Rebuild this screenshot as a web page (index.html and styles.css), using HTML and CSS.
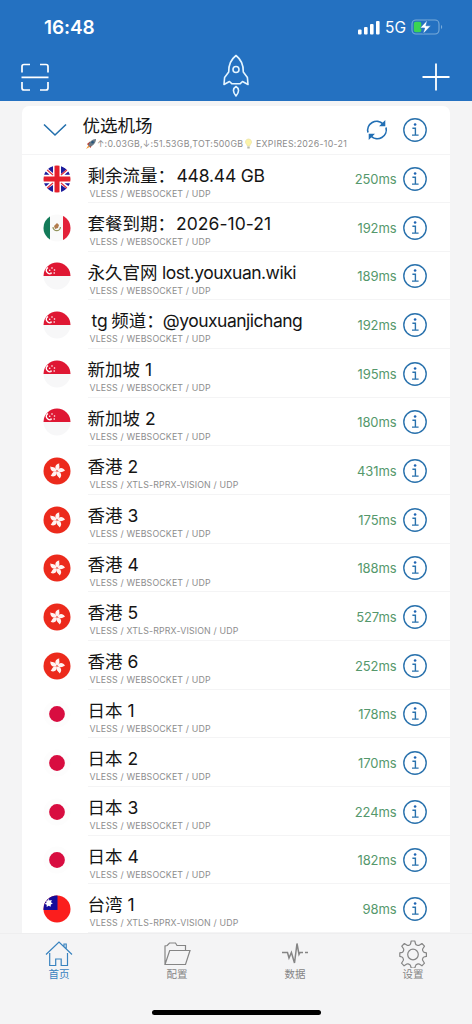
FILE: index.html
```html
<!DOCTYPE html>
<html lang="zh-CN">
<head>
<meta charset="utf-8">
<title>优选机场</title>
<link rel="stylesheet" href="styles.css">
</head>
<body>
<svg class="defs" width="0" height="0">
  <defs>
    <clipPath id="round"><circle cx="14" cy="14" r="13.5"/></clipPath>
    <symbol id="info" viewBox="0 0 26 26">
      <g fill="none" stroke="#2a72ad" stroke-width="1.4"><circle cx="13" cy="13" r="11.2"/><path d="M10.4 11.2H13.4V17.8M10 18.1H16.6"/></g>
      <circle cx="13.1" cy="7.5" r="1.3" fill="#1f64b4"/>
    </symbol>
    <symbol id="gb" viewBox="0 0 28 28"><g clip-path="url(#round)">
      <path fill="#fff" d="M0 0h28v28H0z"/>
      <path fill="#1c1c9c" d="M4 3 10 1v7zM1 9v-4L6.500 9.800H1zM18 1l6 3-6 5zM21.500 9.800 27 5v4.800zM1 18.200h5.500L1 23zM10 20v8l-6-4zM18 20l6 4-6 4zM21.500 18.200H28V23z"/>
      <path stroke="#e53342" stroke-width="1.300" d="M3 4l7 6M25 4l-7 6M3 24l7-6M25 24l-7-6"/>
      <path stroke="#e5202d" stroke-width="5" d="M14 0v28M0 14h28"/>
    </g></symbol>
    <symbol id="mx" viewBox="0 0 28 28"><g clip-path="url(#round)">
      <path fill="#fafafa" d="M0 0h28v28H0z"/><path fill="#137b59" d="M0 0h7v28H0z"/><path fill="#e32139" d="M20 0h8v28h-8z"/>
      <path fill="none" stroke="#91935b" stroke-width="1.200" d="M10 13a3.700 3.700 0 0 0 7.400 0"/><path fill="#b17b4c" d="M11 12l3-3 2 2-1 3-3 1z"/>
    </g></symbol>
    <symbol id="sg" viewBox="0 0 28 28"><g clip-path="url(#round)">
      <path fill="#f7f7f8" d="M0 0h28v28H0z"/><path fill="#df1733" d="M0 0h28v14H0z"/>
      <path fill="none" stroke="#fff" stroke-width="1.300" d="M5 5.500c-4 3 0 7.500 3.500 6"/>
      <g fill="#fff"><circle cx="9" cy="6" r=".8"/><circle cx="6.700" cy="8.200" r=".8"/><circle cx="11.500" cy="8" r=".8"/><circle cx="8" cy="11" r=".8"/><circle cx="11.200" cy="11" r=".8"/></g>
    </g></symbol>
    <symbol id="hk" viewBox="0 0 28 28">
      <circle cx="14" cy="14" r="13.500" fill="#ec2a1c"/>
      <g fill="#fff4f2" transform="rotate(12 14 14)">
        <path id="petal" d="M14 13.500c-3.400-1.200-3.400-6.200.8-7.400-.7 2.100 2.700 3.400-.8 7.400z"/>
        <use href="#petal" transform="rotate(72 14 14)"/><use href="#petal" transform="rotate(144 14 14)"/><use href="#petal" transform="rotate(216 14 14)"/><use href="#petal" transform="rotate(288 14 14)"/>
      </g>
    </symbol>
    <symbol id="jp" viewBox="0 0 28 28"><circle cx="14" cy="14" r="13.500" fill="#fdfdfd"/><circle cx="14" cy="14" r="7.900" fill="#d80d40"/></symbol>
    <symbol id="tw" viewBox="0 0 28 28"><g clip-path="url(#round)">
      <path fill="#fb1e1d" d="M0 0h28v28H0z"/><path fill="#150c9b" d="M0 0h14.500v15H0z"/>
      <path fill="#fff" d="M5.500 3.500l1 2 2.300-.4-.8 2.200 1.800 1.200-2 1-.1 2.300-2-1-2 1.300v-2.300l-2-1 1.900-1.300L3 5.200l2.100.3z"/>
    </g></symbol>
  </defs>
</svg>

<header class="top">
  <div class="status">
    <span class="clock">16:48</span>
    <div class="signals">
      <svg width="22" height="15" viewBox="0 0 22 15" fill="#fff"><rect x="0" y="9.500" width="3.600" height="5" rx="1"/><rect x="6" y="7" width="3.600" height="7.500" rx="1"/><rect x="12" y="4" width="3.600" height="10.500" rx="1"/><rect x="18" y="1" width="3.600" height="13.500" rx="1"/></svg>
      <span class="net">5G</span>
      <svg width="32" height="18" viewBox="0 0 32 18"><rect x="1" y="2" width="27" height="14" rx="4" fill="none" stroke="#79abd9" stroke-width="1.100"/><path d="M30 7v4c1.600-.5 1.600-3.500 0-4z" fill="#79abd9"/><rect x="2.800" y="3.700" width="7.500" height="10.600" rx="2" fill="#3ad453"/><path d="M16.500 2 9 10h4.700L12 16l7.800-8.200h-4.900z" fill="#fff" stroke="#2471c0" stroke-width=".6"/></svg>
    </div>
  </div>
  <nav class="toolbar">
    <svg width="28" height="28" viewBox="0 0 28 28" fill="none" stroke="#fff" stroke-width="1.700"><path d="M1 9.500V3.500Q1 1.500 3 1.500H9M19 1.500h6q2 0 2 2v6M1 19v6q0 2 2 2H9M19 27h6q2 0 2-2v-6M0.500 14.300h27"/></svg>
    <svg width="28" height="46" viewBox="0 0 28 46" fill="none" stroke="#e5f5ff" stroke-width="1.600" stroke-linejoin="round"><path d="M14 1.500C9.500 5 6.500 10 6.700 18L2.600 23.500 2 30.500l5.500-3 2.500 2.300h8l2.500-2.300 5.500 3-.6-7-4.100-5.500C21.500 10 18.500 5 14 1.500z"/><circle cx="14" cy="15.500" r="3"/><path d="M14 32.500c-3.400 2-3.400 5.500 0 9.500 3.400-4 3.400-7.500 0-9.500z"/></svg>
    <svg width="28" height="28" viewBox="0 0 28 28" stroke="#fff" stroke-width="1.800"><path d="M14 .5v27M.5 14h27"/></svg>
  </nav>
</header>

<main class="card">
  <section class="group">
    <svg class="chevron" width="24" height="14" viewBox="0 0 24 14" fill="none" stroke="#2470ad" stroke-width="1.600"><path d="M1 1.500 12 12 23 1.500"/></svg>
    <div class="group-text">
      <div class="title">优选机场</div>
      <div class="quota">
        <svg width="12" height="12" viewBox="0 0 12 12"><path d="M2 6 5 3.500 6.500 8 5.500 10z" fill="#c33b2f"/><path d="M11 1C7 1 4 4.500 3.300 7.200l1.500 1.500C8 8 11 5 11 1z" fill="#697986"/><circle cx="7.600" cy="4.200" r="1.200" fill="#27577f"/><path d="M3.300 7.500 1 11l3.500-2z" fill="#f29a2e"/></svg>
        <span class="usage">↑:0.03GB,↓:51.53GB,TOT:500GB</span>
        <svg width="9" height="12" viewBox="0 0 9 12"><path d="M4.500 1a3 3 0 0 0-2 5.300L3.300 8h2.400l.8-1.700A3 3 0 0 0 4.500 1z" fill="#fbf3a9" stroke="#e8dfa0" stroke-width=".6"/><path d="M3.300 8.500h2.400v2H3.300z" fill="#b7b9a8"/></svg>
        <span class="expiry">EXPIRES:2026-10-21</span>
      </div>
    </div>
    <svg class="refresh" width="22" height="22" viewBox="0 0 22 22" fill="none" stroke="#226fb4" stroke-width="1.700"><path d="M2 13.500A9 9 0 0 1 17 4.800M20 8.500A9 9 0 0 1 5 17.200"/><path fill="#226fb4" stroke="none" d="M19.300 1v6.300H13zM2.700 21v-6.300H9z"/></svg>
    <svg class="info"><use href="#info"/></svg>
  </section>
  <article class="row"><svg class="flag"><use href="#gb"/></svg><div class="body"><div class="text"><div class="title">剩余流量：<span class="volume">448.44 GB</span></div><div class="sub">VLESS / WEBSOCKET / UDP</div></div><span class="ms">250ms</span><svg class="info"><use href="#info"/></svg></div></article>
  <article class="row"><svg class="flag"><use href="#mx"/></svg><div class="body"><div class="text"><div class="title">套餐到期：<span class="date">2026-10-21</span></div><div class="sub">VLESS / WEBSOCKET / UDP</div></div><span class="ms">192ms</span><svg class="info"><use href="#info"/></svg></div></article>
  <article class="row"><svg class="flag"><use href="#sg"/></svg><div class="body"><div class="text"><div class="title">永久官网<span class="latin"> lost.youxuan.wiki</span></div><div class="sub">VLESS / WEBSOCKET / UDP</div></div><span class="ms">189ms</span><svg class="info"><use href="#info"/></svg></div></article>
  <article class="row"><svg class="flag"><use href="#sg"/></svg><div class="body"><div class="text"><div class="title indent"><span class="tg">tg</span>频道：<span class="latin">@youxuanjichang</span></div><div class="sub">VLESS / WEBSOCKET / UDP</div></div><span class="ms">192ms</span><svg class="info"><use href="#info"/></svg></div></article>
  <article class="row"><svg class="flag"><use href="#sg"/></svg><div class="body"><div class="text"><div class="title">新加坡 1</div><div class="sub">VLESS / WEBSOCKET / UDP</div></div><span class="ms">195ms</span><svg class="info"><use href="#info"/></svg></div></article>
  <article class="row"><svg class="flag"><use href="#sg"/></svg><div class="body"><div class="text"><div class="title">新加坡 2</div><div class="sub">VLESS / WEBSOCKET / UDP</div></div><span class="ms">180ms</span><svg class="info"><use href="#info"/></svg></div></article>
  <article class="row"><svg class="flag"><use href="#hk"/></svg><div class="body"><div class="text"><div class="title">香港 2</div><div class="sub">VLESS / XTLS-RPRX-VISION / UDP</div></div><span class="ms">431ms</span><svg class="info"><use href="#info"/></svg></div></article>
  <article class="row"><svg class="flag"><use href="#hk"/></svg><div class="body"><div class="text"><div class="title">香港 3</div><div class="sub">VLESS / WEBSOCKET / UDP</div></div><span class="ms">175ms</span><svg class="info"><use href="#info"/></svg></div></article>
  <article class="row"><svg class="flag"><use href="#hk"/></svg><div class="body"><div class="text"><div class="title">香港 4</div><div class="sub">VLESS / WEBSOCKET / UDP</div></div><span class="ms">188ms</span><svg class="info"><use href="#info"/></svg></div></article>
  <article class="row"><svg class="flag"><use href="#hk"/></svg><div class="body"><div class="text"><div class="title">香港 5</div><div class="sub">VLESS / XTLS-RPRX-VISION / UDP</div></div><span class="ms">527ms</span><svg class="info"><use href="#info"/></svg></div></article>
  <article class="row"><svg class="flag"><use href="#hk"/></svg><div class="body"><div class="text"><div class="title">香港 6</div><div class="sub">VLESS / WEBSOCKET / UDP</div></div><span class="ms">252ms</span><svg class="info"><use href="#info"/></svg></div></article>
  <article class="row"><svg class="flag"><use href="#jp"/></svg><div class="body"><div class="text"><div class="title">日本 1</div><div class="sub">VLESS / WEBSOCKET / UDP</div></div><span class="ms">178ms</span><svg class="info"><use href="#info"/></svg></div></article>
  <article class="row"><svg class="flag"><use href="#jp"/></svg><div class="body"><div class="text"><div class="title">日本 2</div><div class="sub">VLESS / WEBSOCKET / UDP</div></div><span class="ms">170ms</span><svg class="info"><use href="#info"/></svg></div></article>
  <article class="row"><svg class="flag"><use href="#jp"/></svg><div class="body"><div class="text"><div class="title">日本 3</div><div class="sub">VLESS / WEBSOCKET / UDP</div></div><span class="ms">224ms</span><svg class="info"><use href="#info"/></svg></div></article>
  <article class="row"><svg class="flag"><use href="#jp"/></svg><div class="body"><div class="text"><div class="title">日本 4</div><div class="sub">VLESS / WEBSOCKET / UDP</div></div><span class="ms">182ms</span><svg class="info"><use href="#info"/></svg></div></article>
  <article class="row"><svg class="flag"><use href="#tw"/></svg><div class="body"><div class="text"><div class="title">台湾 1</div><div class="sub">VLESS / XTLS-RPRX-VISION / UDP</div></div><span class="ms">98ms</span><svg class="info"><use href="#info"/></svg></div></article>
</main>

<footer class="tabs">
  <div class="tab-list">
    <div class="tab active"><svg width="28" height="28" viewBox="0 0 28 28"><path d="M1 14.500 14 2l13 12.500M19 6.500V4h2.200v4.500M4.700 13v12.500h6V19h5.500v6.500h6.300V13"/></svg><span>首页</span></div>
    <div class="tab"><svg width="28" height="28" viewBox="0 0 28 28"><path d="M2 24V6l2.200-.5L6.500 3h6L14 5.500h8.500v5M2 24.500 6.700 10.500H27L22.500 24.500z"/></svg><span>配置</span></div>
    <div class="tab"><svg width="28" height="28" viewBox="0 0 28 28"><path stroke-width="1.500" d="M1 12.500h5.500L8 18l2.400-5.500L13.500 23l2.500-19.500L18 14.500l1-2h3M24 12.500h3"/></svg><span>数据</span></div>
    <div class="tab"><svg width="28" height="28" viewBox="0 0 28 28"><path stroke-linejoin="round" d="M12.200 1h3.600l.8 3q.2.700 1.700 1.200 1 .4 2 0l2.600-1.700 2.600 2.600-1.700 2.700q-.5.900.1 2.100.5 1.300 1.200 1.400l2.300.5v3.600l-2.500.6q-.8.300-1.200 1.500-.5 1.100.1 2l1.700 2.700-2.600 2.600-2.600-1.700q-1-.5-2.100 0-1.300.5-1.500 1.300l-.9 2.600h-3.600l-.8-2.600q-.3-.9-1.500-1.300-1.200-.5-2.100 0l-2.700 1.700-2.600-2.600 1.700-2.700q.5-.9 0-2-.4-1.200-1.200-1.500L.8 16.400v-3.600l2.400-.5q.7-.2 1.200-1.400.6-1.200.1-2.100L2.800 6.100l2.600-2.600 2.700 1.700q.9.500 2.100 0 1.200-.5 1.300-1.200z"/><circle cx="14" cy="14.500" r="5.300"/></svg><span>设置</span></div>
  </div>
  <div class="home-bar"></div>
</footer>
</body>
</html>
```
FILE: styles.css
```css
* { box-sizing: border-box; }
body {
  margin: 0;
  width: 472px;
  height: 1024px;
  overflow: hidden;
  display: flex;
  flex-direction: column;
  background: #f4f4f5;
  color: #151515;
  font-family: Inter, "Noto Sans CJK SC", sans-serif;
}
svg { display: block; flex: none; }
.defs { position: absolute; }
.top { flex: none; height: 100.500px; background: #2471c1; color: #fff; }
.status { height: 54px; display: flex; justify-content: space-between; padding: 0 29px 0 44px; }
.clock { font-size: 19px; font-weight: 600; line-height: 55px; letter-spacing: -0.1px; }
.signals { display: flex; align-items: center; height: 54px; }
.net { font-size: 15.500px; line-height: 20px; padding-top: 1px; margin: 0 5px 0 5px; }
.toolbar { height: 46px; display: flex; align-items: center; justify-content: space-between; padding: 0 21px; }
.toolbar svg:last-child { margin-right: 1px; }
.card {
  flex: none;
  width: 428px;
  height: 826.500px;
  margin: 5.500px 0 0 22px;
  background: #fff;
  border-radius: 7px 7px 0 0;
  overflow: hidden;
}
.group, .row { display: flex; height: 48.670px; }
.group { align-items: center; padding: 0 22.500px 0 21px; border-bottom: 1px solid #f4f4f5; height: 48.500px; }
.group-text { flex: 1; padding: 4px 0 0 16px; }
.group .title { line-height: 24px; }
.quota { display: flex; align-items: center; height: 12px; padding-left: 2px; font-size: 8.800px; color: #8c8c8c; letter-spacing: 0.280px; white-space: nowrap; }
.usage { width: 146px; }
.quota svg:nth-of-type(2) { margin: 0 3px 0 1px; }
.refresh { margin-right: 14px; }
.row { padding-left: 21px; }
.flag { width: 28px; height: 28px; margin: 10.500px 17px 0 0; }
.body { flex: 1; display: flex; align-items: center; padding: 1.500px 22.500px 0 0; border-bottom: 1px solid #f4f4f5; }
.text { flex: 1; align-self: flex-start; padding-top: 6.500px; }
.title { font-size: 17.500px; line-height: 25px; white-space: nowrap; margin-left: -0.5px; }
.volume { letter-spacing: -0.2px; margin-left: 1.500px; }
.date { letter-spacing: 0.050px; margin-left: 1px; }
.latin { letter-spacing: -0.5px; }
.indent { padding-left: 4px; }
.indent .latin { margin-left: -1px; }
.tg { margin-right: 3.500px; }
.sub { padding-left: 1.500px; font-size: 8.800px; line-height: 12px; letter-spacing: 0.150px; color: #8d8d8d; }
.ms { font-size: 13px; color: #55986c; margin-right: 5px; letter-spacing: -0.1px; }
.info { width: 26px; height: 26px; }
.tabs { flex: 1; background: #f4f4f5; border-top: 1px solid #eeeeef; }
.tab-list { display: flex; padding-top: 6px; }
.tab { width: 118px; display: flex; flex-direction: column; align-items: center; color: #858585; font-size: 10.500px; line-height: 13px; }
.tab svg { fill: none; stroke: currentColor; stroke-width: 1.200; }
.tab.active { color: #3983bf; }
.home-bar { width: 169px; height: 5px; margin: 29.500px auto 0; border-radius: 3px; background: #000; }
```
